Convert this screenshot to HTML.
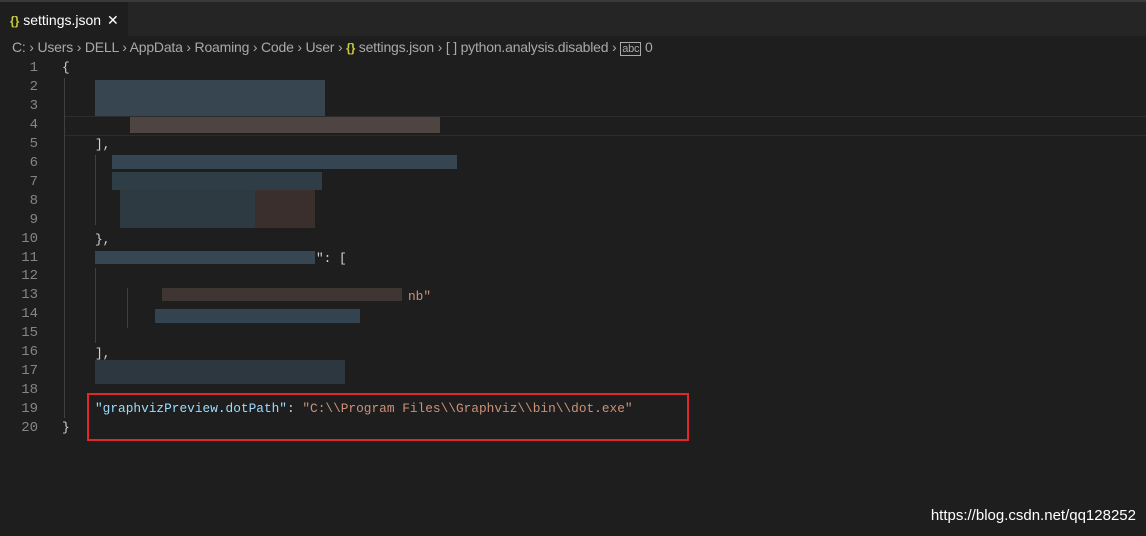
<!DOCTYPE html>
<html><head><meta charset="utf-8"><style>
body{margin:0;width:1146px;height:536px;background:#1e1e1e;overflow:hidden;position:relative;font-family:"Liberation Sans",sans-serif}
.tabbar{position:absolute;left:0;top:0;width:1146px;height:36px;background:#252526;border-top:2px solid #3a3a3a;box-sizing:border-box}
.tab{position:absolute;left:0;top:0;width:128px;height:36px;background:#1e1e1e;color:#fff;font-size:14px;line-height:36px}
.crumb{position:absolute;left:12px;top:39px;color:#a9a9a9;font-size:14px;white-space:nowrap;letter-spacing:-0.2px}
.y{color:#cbcb41;font-weight:bold}
.ln{position:absolute;left:0;width:38px;text-align:right;color:#858585;font-family:"Liberation Mono",monospace;font-size:14px}
.code{position:absolute;font-family:"Liberation Mono",monospace;font-size:12.8px;color:#d4d4d4;white-space:pre}
.b{position:absolute}
.g{position:absolute;width:1px;background:#404040}
</style></head><body>
<div class="tabbar"><div class="tab"><span class="y" style="margin-left:10px;font-size:12px">{}</span> settings.json <span style="margin-left:2px">✕</span></div></div>
<div class="crumb">C: › Users › DELL › AppData › Roaming › Code › User › <span class="y" style="font-size:12px">{}</span> settings.json › [ ] python.analysis.disabled › <span style="font-size:11px;border:1px solid #aaa;padding:0 1px">abc</span> 0</div>
<div class="b" style="left:64px;top:116px;width:1082px;height:18px;border-top:1px solid #2c2c2c;border-bottom:1px solid #2c2c2c"></div>
<div class="g" style="left:64px;top:78px;height:340px"></div>
<div class="g" style="left:95px;top:155px;height:70px"></div>
<div class="g" style="left:95px;top:268px;height:75px"></div>
<div class="g" style="left:127px;top:288px;height:40px"></div>
<script>
for(let i=1;i<=20;i++)document.write('<div class="ln" style="top:'+(60+(i-1)*18.95)+'px">'+i+'</div>');
</script>
<div class="code" style="left:62px;top:60px">{</div>
<div class="code" style="left:62px;top:420px">}</div>
<div class="code" style="left:95px;top:137px">],</div>
<div class="code" style="left:95px;top:232px">},</div>
<div class="code" style="left:95px;top:346px">],</div>
<div class="code" style="left:316px;top:251px">": [</div>
<div class="code" style="left:408px;top:289px;color:#ce9178">nb"</div>
<div class="b" style="left:95px;top:80px;width:230px;height:36px;background:#36454f"></div>
<div class="b" style="left:130px;top:117px;width:310px;height:16px;background:#4e4543"></div>
<div class="b" style="left:112px;top:155px;width:345px;height:14px;background:#354551"></div>
<div class="b" style="left:112px;top:172px;width:210px;height:18px;background:#2f3d46"></div>
<div class="b" style="left:120px;top:190px;width:195px;height:38px;background:#2e3a42"></div>
<div class="b" style="left:255px;top:190px;width:60px;height:38px;background:#3a2f2c"></div>
<div class="b" style="left:95px;top:251px;width:220px;height:13px;background:#364652"></div>
<div class="b" style="left:162px;top:288px;width:240px;height:13px;background:#3f3634"></div>
<div class="b" style="left:155px;top:309px;width:205px;height:14px;background:#344350"></div>
<div class="b" style="left:95px;top:360px;width:250px;height:24px;background:#2c3740"></div>
<div class="code" style="left:95px;top:401px"><span style="color:#9cdcfe">"graphvizPreview.dotPath"</span>: <span style="color:#ce9178">"C:\\Program Files\\Graphviz\\bin\\dot.exe"</span></div>
<div class="b" style="left:87px;top:393px;width:598px;height:44px;border:2px solid #e0282a"></div>
<div style="position:absolute;right:10px;top:507px;color:#fff;font-size:15px">https://blog.csdn.net/qq128252</div>
</body></html>
